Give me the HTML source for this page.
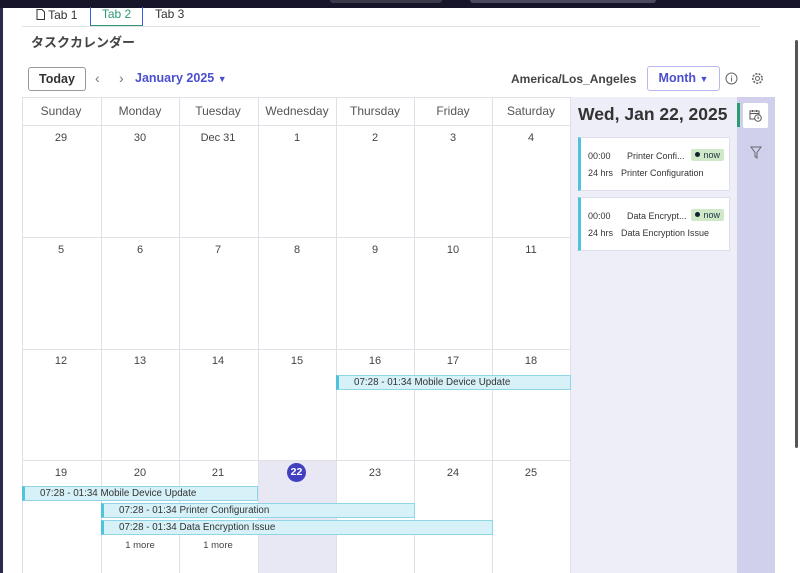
<!DOCTYPE html><html><head><style>
*{box-sizing:border-box;margin:0;padding:0}
body{width:800px;height:573px;overflow:hidden;background:#fff;font-family:"Liberation Sans","Noto Sans CJK JP",sans-serif;color:#333;position:relative}
.a{position:absolute}
.vl{position:absolute;width:1px;background:#e0e0e6}
.hl{position:absolute;height:1px;background:#e0e0e6}
.dn{position:absolute;font-size:11px;color:#444;text-align:center;width:78px}
.hd{position:absolute;font-size:12px;color:#555;text-align:center;width:78px;top:104px}
.ev{position:absolute;height:15px;background:#d6f1f7;border:1px solid #8fd5e6;border-left:3px solid #4fc3dc;font-size:9.8px;color:#333;line-height:13px;padding-left:15px;white-space:nowrap}
.card{position:absolute;left:578px;width:152px;height:54px;background:#fff;border:1px solid #dde;border-left:3px solid #4fc3dc;font-size:9px;color:#333}
.now{position:absolute;right:5px;top:11px;background:#cfe8c8;color:#234;font-size:9px;padding:1px 4px;border-radius:2px}
.now:before{content:"";display:inline-block;width:5px;height:5px;border-radius:50%;background:#123;margin-right:3px;vertical-align:1px}
</style></head><body>
<div class="a" style="left:0;top:0;width:800px;height:8px;background:#16152a"></div>
<div class="a" style="left:330px;top:0;width:112px;height:3px;background:#3a3a4a;border-radius:0 0 3px 3px"></div>
<div class="a" style="left:470px;top:0;width:186px;height:3px;background:#4a4a5e;border-radius:0 0 3px 3px"></div>
<div class="a" style="left:0;top:8px;width:3px;height:565px;background:#2a2a4a"></div>
<div class="a" style="left:795px;top:40px;width:3px;height:408px;background:#555;border-radius:2px"></div>
<div class="a" style="left:36px;top:8px;font-size:12px;color:#333">
<svg width="9" height="11" viewBox="0 0 9 11" style="vertical-align:-1px"><path d="M1 .5h5l2.5 2.5v7.5h-7.5z" fill="none" stroke="#333"/></svg> Tab 1</div>
<div class="a" style="left:90px;top:7px;width:53px;height:20px;border:1.5px solid #3a5ee0;border-top:none;border-bottom:2px solid #2e9a70;color:#2e9a70;font-size:12px;text-align:center;line-height:14px">Tab 2</div>
<div class="a" style="left:155px;top:7px;font-size:12px;color:#333">Tab 3</div>
<div class="hl" style="left:22px;top:26px;width:738px;background:#e2e2e2"></div>
<div class="a" style="left:31px;top:32px;font-size:13px;font-weight:bold;color:#444">タスクカレンダー</div>
<div class="a" style="left:28px;top:67px;width:58px;height:24px;border:1px solid #999;border-radius:3px;font-size:12.5px;font-weight:bold;color:#333;text-align:center;line-height:22px">Today</div>
<div class="a" style="left:95px;top:70px;font-size:14px;color:#777">&#8249;</div>
<div class="a" style="left:119px;top:70px;font-size:14px;color:#777">&#8250;</div>
<div class="a" style="left:135px;top:71px;font-size:12.5px;font-weight:bold;color:#4a4fd0">January 2025 <span style="font-size:9px">&#9660;</span></div>
<div class="a" style="left:511px;top:72px;font-size:12px;font-weight:bold;color:#444">America/Los_Angeles</div>
<div class="a" style="left:647px;top:66px;width:73px;height:25px;border:1px solid #b8b8f0;border-radius:3px;font-size:12.5px;font-weight:bold;color:#4a4fd0;text-align:center;line-height:23px">Month <span style="font-size:9px">&#9660;</span></div>
<svg class="a" style="left:725px;top:72px" width="13" height="13"><circle cx="6.5" cy="6.5" r="5.5" fill="none" stroke="#666"/><path d="M6.5 5.5v4M6.5 3.5v1" stroke="#666"/></svg>
<svg class="a" style="left:751px;top:72px" width="13" height="13"><circle cx="6.5" cy="6.5" r="4.7" fill="none" stroke="#666" stroke-width="1.6" stroke-dasharray="2 1.3"/><circle cx="6.5" cy="6.5" r="2" fill="none" stroke="#666"/></svg>
<div class="a" style="left:258px;top:460px;width:78px;height:113px;background:#e8e8f4"></div>
<div class="hl" style="left:22px;top:97px;width:549px"></div>
<div class="hl" style="left:22px;top:125px;width:549px"></div>
<div class="hl" style="left:22px;top:237px;width:549px"></div>
<div class="hl" style="left:22px;top:349px;width:549px"></div>
<div class="hl" style="left:22px;top:460px;width:549px"></div>
<div class="vl" style="left:22px;top:97px;height:476px"></div>
<div class="vl" style="left:101px;top:97px;height:476px"></div>
<div class="vl" style="left:179px;top:97px;height:476px"></div>
<div class="vl" style="left:258px;top:97px;height:476px"></div>
<div class="vl" style="left:336px;top:97px;height:476px"></div>
<div class="vl" style="left:414px;top:97px;height:476px"></div>
<div class="vl" style="left:492px;top:97px;height:476px"></div>
<div class="vl" style="left:570px;top:97px;height:476px"></div>
<div class="hd" style="left:22px">Sunday</div><div class="hd" style="left:101px">Monday</div><div class="hd" style="left:179px">Tuesday</div><div class="hd" style="left:258px">Wednesday</div><div class="hd" style="left:336px">Thursday</div><div class="hd" style="left:414px">Friday</div><div class="hd" style="left:492px">Saturday</div>
<div class="dn" style="left:22px;top:132px">29</div><div class="dn" style="left:101px;top:132px">30</div><div class="dn" style="left:179px;top:132px">Dec 31</div><div class="dn" style="left:258px;top:132px">1</div><div class="dn" style="left:336px;top:132px">2</div><div class="dn" style="left:414px;top:132px">3</div><div class="dn" style="left:492px;top:132px">4</div>
<div class="dn" style="left:22px;top:244px">5</div><div class="dn" style="left:101px;top:244px">6</div><div class="dn" style="left:179px;top:244px">7</div><div class="dn" style="left:258px;top:244px">8</div><div class="dn" style="left:336px;top:244px">9</div><div class="dn" style="left:414px;top:244px">10</div><div class="dn" style="left:492px;top:244px">11</div>
<div class="dn" style="left:22px;top:355px">12</div><div class="dn" style="left:101px;top:355px">13</div><div class="dn" style="left:179px;top:355px">14</div><div class="dn" style="left:258px;top:355px">15</div><div class="dn" style="left:336px;top:355px">16</div><div class="dn" style="left:414px;top:355px">17</div><div class="dn" style="left:492px;top:355px">18</div>
<div class="dn" style="left:22px;top:467px">19</div><div class="dn" style="left:101px;top:467px">20</div><div class="dn" style="left:179px;top:467px">21</div><div class="dn" style="left:336px;top:467px">23</div><div class="dn" style="left:414px;top:467px">24</div><div class="dn" style="left:492px;top:467px">25</div>
<div class="a" style="left:287px;top:463px;width:19px;height:19px;border-radius:50%;background:#4040c0;color:#fff;font-size:10.5px;font-weight:bold;text-align:center;line-height:19px">22</div>
<div class="ev" style="left:336px;top:375px;width:235px">07:28 - 01:34 Mobile Device Update</div>
<div class="ev" style="left:22px;top:486px;width:236px">07:28 - 01:34 Mobile Device Update</div>
<div class="ev" style="left:101px;top:503px;width:314px">07:28 - 01:34 Printer Configuration</div>
<div class="ev" style="left:101px;top:520px;width:392px">07:28 - 01:34 Data Encryption Issue</div>
<div class="dn" style="left:101px;top:540px;font-size:9.5px">1 more</div>
<div class="dn" style="left:179px;top:540px;font-size:9.5px">1 more</div>
<div class="a" style="left:571px;top:97px;width:166px;height:476px;background:#eeeef8"></div>
<div class="a" style="left:737px;top:97px;width:38px;height:476px;background:#d0d0ec"></div>
<div class="a" style="left:578px;top:104px;font-size:17.5px;font-weight:bold;color:#333">Wed, Jan 22, 2025</div>
<div class="a" style="left:737px;top:103px;width:3px;height:24px;background:#2e9a70"></div>
<div class="a" style="left:743px;top:103px;width:25px;height:25px;background:#fff;border-radius:2px"></div>
<svg class="a" style="left:749px;top:109px" width="13" height="13"><rect x="1" y="2" width="9" height="8" fill="none" stroke="#555"/><path d="M1 4.5h9M3.5 1v2M7.5 1v2" stroke="#555"/><circle cx="9" cy="9" r="3.3" fill="#fff" stroke="#555"/><path d="M9 7.5v1.7h1.2" stroke="#555" fill="none"/></svg>
<svg class="a" style="left:750px;top:146px" width="12" height="13"><path d="M1 1h10L7 6.5V12L5 10.5V6.5z" fill="none" stroke="#666"/></svg>
<div class="card" style="top:137px"><span class="a" style="left:7px;top:13px">00:00</span><span class="a" style="left:46px;top:13px">Printer Confi...</span><span class="now">now</span><span class="a" style="left:7px;top:30px">24 hrs</span><span class="a" style="left:40px;top:30px">Printer Configuration</span></div>
<div class="card" style="top:197px"><span class="a" style="left:7px;top:13px">00:00</span><span class="a" style="left:46px;top:13px">Data Encrypt...</span><span class="now">now</span><span class="a" style="left:7px;top:30px">24 hrs</span><span class="a" style="left:40px;top:30px">Data Encryption Issue</span></div>
</body></html>
